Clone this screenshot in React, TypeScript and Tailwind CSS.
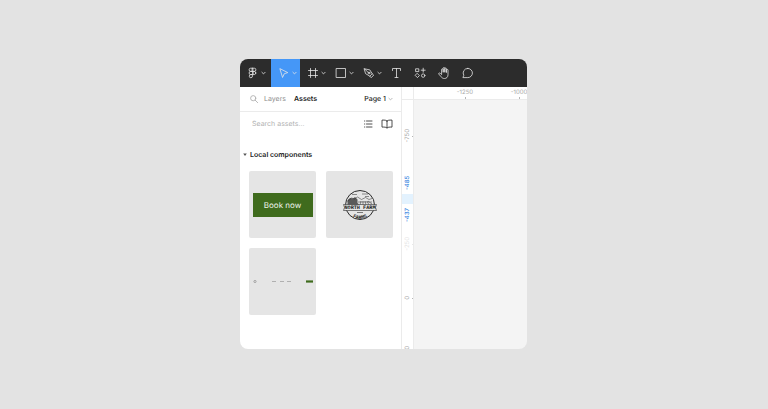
import type { ReactNode } from 'react';

function Icon({ children, size = 12 }: { children: ReactNode; size?: number }) {
  return (
    <svg
      width={size}
      height={size}
      viewBox={`0 0 ${size} ${size}`}
      fill="none"
      stroke="currentColor"
      strokeWidth="0.8"
      strokeLinejoin="round"
      strokeLinecap="round"
      className="shrink-0"
      aria-hidden="true"
    >
      {children}
    </svg>
  );
}

function Chevron() {
  return (
    <svg width="5" height="4" viewBox="0 0 5 4" fill="none" stroke="currentColor" strokeWidth="0.8" className="shrink-0" aria-hidden="true">
      <path d="M0.6 1 L2.5 2.9 L4.4 1" />
    </svg>
  );
}

function MenuTool({ label, active, children }: { label: string; active?: boolean; children: ReactNode }) {
  return (
    <button
      type="button"
      aria-label={label}
      className={`flex h-full items-center justify-center gap-0.5 pl-1 ${active ? 'ml-[3px] w-[29px] bg-[#4597f7]' : 'w-7'}`}
    >
      {children}
      <Chevron />
    </button>
  );
}

function Tool({ label, children }: { label: string; children: ReactNode }) {
  return (
    <button type="button" aria-label={label} className="flex h-full w-6 items-center justify-center">
      {children}
    </button>
  );
}

function Toolbar() {
  return (
    <header className="flex h-7 items-center bg-[#2c2c2c] text-[#e6e6e6]">
      <MenuTool label="Main menu">
        <Icon>
          <path d="M5.5 1.2H3.7a1.6 1.6 0 0 0 0 3.2h1.8zM5.5 1.2h1.8a1.6 1.6 0 0 1 0 3.2H5.5zM5.5 4.4H3.7a1.6 1.6 0 0 0 0 3.2h1.8zM5.5 7.6H3.7a1.6 1.6 0 1 0 1.8 1.6z" />
          <circle cx="7.2" cy="6" r="1.6" />
        </Icon>
      </MenuTool>
      <MenuTool label="Move" active>
        <Icon>
          <path d="M2.2 1.8l7.6 3.8-3.5 1.1-1.6 3.4z" />
        </Icon>
      </MenuTool>
      <MenuTool label="Frame">
        <Icon>
          <path d="M3.5 1.5v9M8.5 1.5v9M1.5 3.5h9M1.5 8.5h9" />
        </Icon>
      </MenuTool>
      <MenuTool label="Rectangle">
        <Icon>
          <path d="M1.5 1.5h9v9h-9z" strokeLinejoin="miter" />
        </Icon>
      </MenuTool>
      <MenuTool label="Pen">
        <Icon>
          <path d="M1.5 1.8l5.3 1.1 2.4 3.8-2.4 2.5-3.9-2.4zM1.5 1.8l3.9 3.9M9.1 6.7l1.6 1.4-2.5 2.6-1.5-1.6" />
          <circle cx="6" cy="6" r="0.9" />
        </Icon>
      </MenuTool>
      <Tool label="Text">
        <Icon>
          <path d="M2.5 3.5V1.5h8v2M6.5 1.5v9M5 10.5h3" />
        </Icon>
      </Tool>
      <Tool label="Resources">
        <Icon>
          <path d="M2 1.8h2.8v2.8H2zM9.2 1.2v4M7.2 3.2h4M3.4 6.6l2 2-2 2-2-2z" />
          <circle cx="9.2" cy="8.6" r="1.7" />
        </Icon>
      </Tool>
      <Tool label="Hand tool">
        <Icon>
          <path d="M3.6 7.2V2.6a.8.8 0 0 1 1.6 0v2.7V1.3a.8.8 0 0 1 1.6 0v4V1.8a.8.8 0 0 1 1.6 0v3.8V3.2a.8.8 0 0 1 1.6 0v4.5c0 2.4-1.5 3.8-3.6 3.8-1.6 0-2.6-.7-3.3-1.8L.8 7.1c-.5-.9.6-1.6 1.4-.9z" />
        </Icon>
      </Tool>
      <Tool label="Comment">
        <Icon>
          <path d="M5.8 1.4a4.6 4.6 0 1 1 0 9.2H.9l.9-2.3A4.6 4.6 0 0 1 5.8 1.4z" />
        </Icon>
      </Tool>
    </header>
  );
}

function FarmLogo() {
  return (
    <svg width="34" height="32" viewBox="0 0 34 32" fill="none" stroke="#2b2b2b" role="img" aria-label="North Farm logo">
      <circle cx="17" cy="16" r="14.5" strokeWidth="1" />
      <path d="M4.5 12.5l4-3.5 3 1 3-2 4 2.5 4-2 3.5 2 3-1M9 5.5h5M19 5h6M22 7.5h4" strokeWidth="0.5" />
      <path d="M4.5 11l2.5-2 3 0.5 2-1.5 2.5 2.5v3.5l2 2H4.5z" fill="#2b2b2b" fillOpacity="0.75" stroke="none" />
      <path d="M17 16l1-4M20 16v-4M23 16l-1-4M26 16l-2-4M29 15l-4-3M15 13h14" strokeWidth="0.5" />
      <path d="M0.5 15.5h33l-1 3 1 3h-33l1-3z" fill="#e5e5e5" strokeWidth="0.6" />
      <text x="17" y="20.3" textAnchor="middle" fontSize="5.2" fontWeight="700" fontFamily="Liberation Mono, monospace" fill="#222222" stroke="none">
        NORTH FARM
      </text>
      <path d="M14 23.5h6" strokeWidth="0.6" />
      <path id="farm-arc" d="M6 25a15 15 0 0 0 22 0" stroke="none" />
      <text fontSize="5" fontWeight="700" fontFamily="Liberation Mono, monospace" fill="#222222" stroke="none" textAnchor="middle">
        <textPath href="#farm-arc" startOffset="50%">FARMS</textPath>
      </text>
    </svg>
  );
}

function AssetCard({ label, children }: { label: string; children: ReactNode }) {
  return (
    <button type="button" aria-label={label} className="flex aspect-square items-center justify-center rounded-xs bg-[#e5e5e5]">
      {children}
    </button>
  );
}

function AssetsPanel() {
  return (
    <aside className="w-[162px] shrink-0 border-r border-[#ebebeb] bg-white text-[7px] leading-3 text-[#222222]">
      <nav className="flex h-[25px] items-center border-b border-[#ebebeb] px-2">
        <button type="button" aria-label="Search" className="text-[#a8a8a8]">
          <Icon>
            <circle cx="5.2" cy="5.2" r="2.6" />
            <path d="M7.2 7.2l2.5 2.5" />
          </Icon>
        </button>
        <button type="button" className="ml-1 text-[#8c8c8c]">Layers</button>
        <button type="button" className="ml-2 font-semibold">Assets</button>
        <button type="button" className="ml-auto flex items-center gap-0.5 font-medium">
          Page 1
          <span className="text-[#a8a8a8]"><Chevron /></span>
        </button>
      </nav>
      <div className="flex h-6 items-center gap-[7px] pr-2 pl-3">
        <input
          type="text"
          aria-label="Search assets"
          placeholder="Search assets..."
          className="min-w-0 flex-1 bg-transparent outline-none placeholder:text-[#b0b0b0]"
        />
        <button type="button" aria-label="List view">
          <Icon>
            <path d="M4.5 3h5.5M4.5 6h5.5M4.5 9h5.5M2.5 3h.3M2.5 6h.3M2.5 9h.3" />
          </Icon>
        </button>
        <button type="button" aria-label="Libraries">
          <Icon>
            <path d="M6 3C5.2 2.2 4 2 1 2.1v7c2.6-.1 4.2 0 5 1 .8-1 2.4-1.1 5-1v-7c-3-.1-4.2.1-5 .9zM6 3v7" />
          </Icon>
        </button>
      </div>
      <button type="button" aria-expanded="true" className="flex h-[35px] items-center gap-[3px] pt-0.5 pl-[3px] font-semibold">
        <svg width="4" height="4" viewBox="0 0 4 4" fill="#555555" aria-hidden="true">
          <path d="M0.2 0.6h3.6L2 3z" />
        </svg>
        Local components
      </button>
      <div className="grid grid-cols-2 gap-2.5 pr-2 pb-[34px] pl-[9px]">
        <AssetCard label="Book now button">
          <span className="flex h-6 w-[60px] items-center justify-center bg-[#3f6b1d] text-[8px] text-[#eef3ea]">Book now</span>
        </AssetCard>
        <AssetCard label="Logo">
          <FarmLogo />
        </AssetCard>
        <AssetCard label="Navigation bar">
          <svg width="60" height="4" viewBox="0 0 60 4" aria-hidden="true">
            <circle cx="2" cy="1.5" r="1.1" fill="none" stroke="#8b8b8b" strokeWidth="0.7" />
            <path d="M19 1.5h4M27 1.5h4M34 1.5h4" stroke="#b0b0b0" strokeWidth="1" />
            <path d="M53 0.4h7v2.2h-7z" fill="#3f6b1d" />
          </svg>
        </AssetCard>
      </div>
    </aside>
  );
}

function VerticalMark({ value }: { value?: string }) {
  return (
    <div className="flex h-[54px] shrink-0 items-center justify-between pl-0.5">
      {value && (
        <>
          <span className={`rotate-180 [writing-mode:vertical-rl] ${value === '-250' ? 'opacity-30' : ''}`}>{value}</span>
          <span className={`h-px w-0.5 bg-[#b5b5b5] ${value === '-250' ? 'opacity-30' : ''}`} />
        </>
      )}
    </div>
  );
}

function HorizontalMark({ value }: { value: string }) {
  return (
    <div className="flex w-[54px] shrink-0 flex-col items-center justify-between pt-0.5">
      <span>{value}</span>
      <span className="h-0.5 w-px bg-[#b5b5b5]" />
    </div>
  );
}

function Canvas() {
  return (
    <main className="flex min-w-0 flex-1 flex-col bg-[#f4f4f4] text-[6px] leading-2 text-[#a8a8a8]">
      <div className="flex h-[13px] overflow-hidden border-b border-[#ebebeb] bg-white">
        <div className="w-3 shrink-0 border-r border-[#ebebeb]" />
        <div className="flex pl-6">
          <HorizontalMark value="-1250" />
          <HorizontalMark value="-1000" />
        </div>
      </div>
      <div className="relative h-0 w-3 flex-auto overflow-hidden border-r border-[#ebebeb] bg-white pt-[9px]">
        <VerticalMark value="-750" />
        <VerticalMark />
        <VerticalMark value="-250" />
        <VerticalMark value="0" />
        <VerticalMark value="250" />
        <div className="absolute inset-x-0 top-19 flex flex-col items-start gap-1 font-medium text-[#2f80e0]">
          <span className="ml-0.5 h-3.5 rotate-180 text-center [writing-mode:vertical-rl]">-485</span>
          <span className="h-2.5 w-full bg-[#e3f2fe]" />
          <span className="ml-0.5 h-3.5 rotate-180 text-center [writing-mode:vertical-rl]">-437</span>
        </div>
      </div>
    </main>
  );
}

export default function App() {
  return (
    <div className="flex min-h-screen items-center justify-center bg-[#e3e3e3] pr-px pb-px font-['Inter','Liberation_Sans',sans-serif] **:[text-rendering:geometricPrecision]">
      <div className="w-full max-w-[287px] overflow-hidden rounded-lg">
        <Toolbar />
        <div className="flex">
          <AssetsPanel />
          <Canvas />
        </div>
      </div>
    </div>
  );
}
